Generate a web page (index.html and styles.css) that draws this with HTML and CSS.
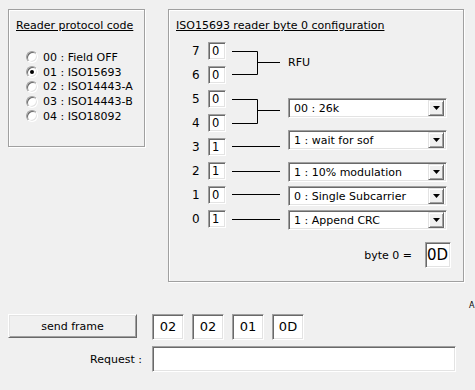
FILE: index.html
```html
<!DOCTYPE html>
<html>
<head>
<meta charset="utf-8">
<link rel="stylesheet" href="styles.css">
</head>
<body>
<div class="top">
  <div class="group proto">
    <div class="gtitle">Reader protocol code</div>
    <div class="radios">
      <div class="radio"><span class="rb"></span><span>00 : Field OFF</span></div>
      <div class="radio"><span class="rb on"></span><span>01 : ISO15693</span></div>
      <div class="radio"><span class="rb"></span><span>02 : ISO14443-A</span></div>
      <div class="radio"><span class="rb"></span><span>03 : ISO14443-B</span></div>
      <div class="radio"><span class="rb"></span><span>04 : ISO18092</span></div>
    </div>
  </div>
  <div class="group config">
    <div class="gtitle">ISO15693 reader byte 0 configuration</div>
    <div class="bits">
      <div class="lbl r1">7</div><div class="tb bit r1">0</div>
      <div class="lbl r2">6</div><div class="tb bit r2">0</div>
      <div class="lbl r3">5</div><div class="tb bit r3">0</div>
      <div class="lbl r4">4</div><div class="tb bit r4">0</div>
      <div class="lbl r5">3</div><div class="tb bit r5">1</div>
      <div class="lbl r6">2</div><div class="tb bit r6">1</div>
      <div class="lbl r7">1</div><div class="tb bit r7">0</div>
      <div class="lbl r8">0</div><div class="tb bit r8">1</div>

      <svg class="lines span2 r1" width="62" height="48" viewBox="0 0 62 48"><path d="M6 9.5H31.5V32.5H6M31.5 20.5H54" fill="none" stroke="#000" stroke-width="1"/></svg>
      <svg class="lines span2 r3" width="62" height="48" viewBox="0 0 62 48"><path d="M6 9.5H31.5V33.5H6M31.5 20.5H54" fill="none" stroke="#000" stroke-width="1"/></svg>
      <svg class="lines r5" width="62" height="24" viewBox="0 0 62 24"><path d="M6 8.5H54" stroke="#000" stroke-width="1"/></svg>
      <svg class="lines r6" width="62" height="24" viewBox="0 0 62 24"><path d="M6 9.5H54" stroke="#000" stroke-width="1"/></svg>
      <svg class="lines r7" width="62" height="24" viewBox="0 0 62 24"><path d="M6 8.5H54" stroke="#000" stroke-width="1"/></svg>
      <svg class="lines r8" width="62" height="24" viewBox="0 0 62 24"><path d="M6 9.5H54" stroke="#000" stroke-width="1"/></svg>

      <div class="rfu span2 r1">RFU</div>
      <div class="combo span2 r3 c-mid"><span class="ctext">00 : 26k</span><span class="cbtn"><svg width="7" height="4" viewBox="0 0 7 4"><path d="M0 0H7L3.5 4Z" fill="#000"/></svg></span></div>
      <div class="combo r5 c-up"><span class="ctext">1 : wait for sof</span><span class="cbtn"><svg width="7" height="4" viewBox="0 0 7 4"><path d="M0 0H7L3.5 4Z" fill="#000"/></svg></span></div>
      <div class="combo r6"><span class="ctext">1 : 10% modulation</span><span class="cbtn"><svg width="7" height="4" viewBox="0 0 7 4"><path d="M0 0H7L3.5 4Z" fill="#000"/></svg></span></div>
      <div class="combo r7"><span class="ctext">0 : Single Subcarrier</span><span class="cbtn"><svg width="7" height="4" viewBox="0 0 7 4"><path d="M0 0H7L3.5 4Z" fill="#000"/></svg></span></div>
      <div class="combo r8"><span class="ctext">1 : Append CRC</span><span class="cbtn"><svg width="7" height="4" viewBox="0 0 7 4"><path d="M0 0H7L3.5 4Z" fill="#000"/></svg></span></div>
    </div>
    <div class="byte0"><span class="b0lbl">byte 0 =</span><div class="tb big">0D</div></div>
  </div>
</div>
<div class="arow"><span>A</span></div>
<div class="bottom">
  <div class="btn">send frame</div>
  <div class="frame">
    <div class="tb fb">02</div>
    <div class="tb fb">02</div>
    <div class="tb fb">01</div>
    <div class="tb fb">0D</div>
  </div>
  <div class="reqlbl">Request :</div>
  <div class="tb req"></div>
</div>
</body>
</html>
```

FILE: styles.css
```css
html, body {
  margin: 0;
  padding: 0;
}
body {
  width: 475px;
  height: 390px;
  overflow: hidden;
  background: #f0f0f0;
  font-family: "DejaVu Sans", sans-serif;
  font-size: 11px;
  color: #000;
}
.top {
  display: flex;
  align-items: flex-start;
  padding: 9px 0 0 8px;
  gap: 23px;
  height: 273px;
}
.group {
  box-sizing: border-box;
  border: 1px solid #a0a0a0;
  box-shadow: inset 1px 1px 0 #fff, 1px 1px 0 #fff;
}
.proto {
  width: 137px;
  height: 138px;
}
.config {
  width: 296px;
  height: 273px;
}
.gtitle {
  text-decoration: underline;
  line-height: 13px;
  margin: 9px 0 0 7px;
  white-space: nowrap;
}
.radios {
  margin: 18px 0 0 17px;
  display: flex;
  flex-direction: column;
}
.radio {
  display: flex;
  align-items: center;
  height: 14.75px;
  gap: 5px;
  white-space: nowrap;
}
.rb {
  box-sizing: border-box;
  width: 12px;
  height: 12px;
  border-radius: 50%;
  border: 1px solid;
  border-color: #a0a0a0 #fff #fff #a0a0a0;
  background: #fff;
  box-shadow: inset 1px 1px 0 #696969, inset -1px -1px 0 #e3e3e3;
  display: flex;
  align-items: center;
  justify-content: center;
  flex: none;
}
.rb.on::after {
  content: "";
  width: 4px;
  height: 4px;
  border-radius: 50%;
  background: #000;
}
.bits {
  display: grid;
  grid-template-columns: 19px 18px 62px 159px;
  grid-template-rows: repeat(8, 24px);
  margin: 10px 0 0 20px;
}
.r1 { grid-row: 1; }
.r2 { grid-row: 2; }
.r3 { grid-row: 3; }
.r4 { grid-row: 4; }
.r5 { grid-row: 5; }
.r6 { grid-row: 6; }
.r7 { grid-row: 7; }
.r8 { grid-row: 8; }
.span2.r1 { grid-row: 1 / span 2; }
.span2.r3 { grid-row: 3 / span 2; }
.lbl {
  grid-column: 1;
  font-size: 12px;
  line-height: 18px;
  padding-left: 3px;
}
.tb {
  box-sizing: border-box;
  background: #fff;
  border: 1px solid;
  border-color: #a0a0a0 #fff #fff #a0a0a0;
  box-shadow: inset 1px 1px 0 #696969, inset -1px -1px 0 #e3e3e3;
}
.bit {
  grid-column: 2;
  width: 18px;
  height: 18px;
  font-size: 11.5px;
  line-height: 16px;
  padding-left: 3px;
}
.lines {
  grid-column: 3;
  display: block;
}
.rfu {
  grid-column: 4;
  align-self: start;
  margin-top: 14px;
  line-height: 13px;
}
.combo {
  grid-column: 4;
  align-self: start;
  box-sizing: border-box;
  width: 159px;
  height: 20px;
  background: #fff;
  border: 1px solid;
  border-color: #a0a0a0 #fff #fff #a0a0a0;
  box-shadow: inset 1px 1px 0 #696969, inset -1px -1px 0 #e3e3e3;
  display: flex;
  align-items: center;
  padding: 2px;
}
.c-mid { margin-top: 8px; }
.c-up { margin-top: -8px; }
.ctext {
  flex: 1;
  padding-left: 3px;
  white-space: nowrap;
  overflow: hidden;
}
.cbtn {
  box-sizing: border-box;
  width: 16px;
  height: 16px;
  background: #f0f0f0;
  border: 1px solid;
  border-color: #e3e3e3 #696969 #696969 #e3e3e3;
  box-shadow: inset 1px 1px 0 #fff, inset -1px -1px 0 #a0a0a0;
  display: flex;
  align-items: center;
  justify-content: center;
  flex: none;
}
.cbtn svg { display: block; }
.byte0 {
  display: flex;
  justify-content: flex-end;
  align-items: center;
  gap: 13px;
  margin: 8px 12px 0 0;
}
.b0lbl {
  font-size: 11px;
}
.big {
  width: 26px;
  height: 26px;
  font-size: 15px;
  line-height: 24px;
  padding-left: 1px;
}
.arow {
  margin-top: 17px;
  padding-left: 469px;
  height: 13px;
  line-height: 13px;
  font-size: 8px;
  white-space: nowrap;
}
.bottom {
  display: grid;
  grid-template-columns: 134px 304px;
  grid-template-rows: 26px 26px;
  column-gap: 10px;
  row-gap: 6px;
  margin-top: 2px;
  padding-left: 8px;
}
.btn {
  box-sizing: border-box;
  width: 129px;
  height: 24px;
  background: #f0f0f0;
  border: 1px solid;
  border-color: #fff #696969 #696969 #fff;
  box-shadow: inset 1px 1px 0 #e3e3e3, inset -1px -1px 0 #a0a0a0;
  display: flex;
  align-items: center;
  justify-content: center;
}
.frame {
  display: flex;
  gap: 8px;
}
.fb {
  width: 32px;
  height: 26px;
  font-size: 13px;
  line-height: 24px;
  text-align: center;
}
.reqlbl {
  justify-self: end;
  align-self: center;
}
.req {
  width: 304px;
  height: 26px;
}
```
